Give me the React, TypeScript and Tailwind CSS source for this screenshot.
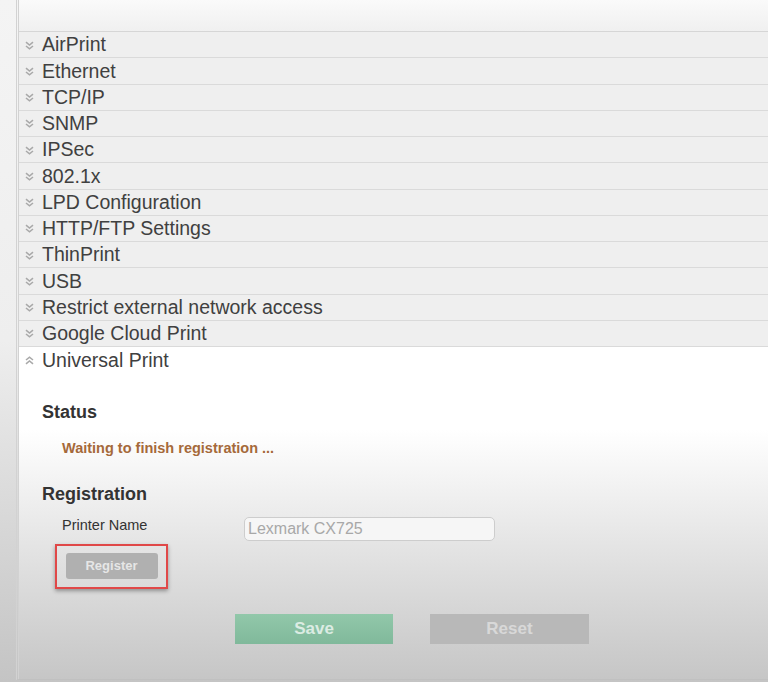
import React from 'react'

const sections = [
  'AirPrint',
  'Ethernet',
  'TCP/IP',
  'SNMP',
  'IPSec',
  '802.1x',
  'LPD Configuration',
  'HTTP/FTP Settings',
  'ThinPrint',
  'USB',
  'Restrict external network access',
  'Google Cloud Print',
]

function Chevrons({ up = false }: { up?: boolean }) {
  return (
    <svg width="9" height="9" viewBox="0 0 9 9" className={up ? 'rotate-180' : ''}>
      <path d="M1 1.2 L4.5 4 L8 1.2" fill="none" stroke="#a9a9a9" strokeWidth="1.6" />
      <path d="M1 5 L4.5 7.8 L8 5" fill="none" stroke="#a9a9a9" strokeWidth="1.6" />
    </svg>
  )
}

function App() {
  return (
    <div
      className="w-[768px] h-[682px] flex overflow-hidden bg-gradient-to-b from-[#f4f4f4] via-[#eeeeee] to-[#c4c4c4]"
      style={{ fontFamily: '"Liberation Sans", Arial, sans-serif' }}
    >
      {/* left margin strip */}
      <div className="w-[16px] shrink-0" />

      <div className="flex-1 flex flex-col border-l-[3px] border-double border-[#d2d2d2] h-[680px] border-b border-b-[#c0c0c0]">
        {/* header remnant */}
        <div className="h-[32px] bg-gradient-to-b from-[#fafafa] to-[#f0f0f0] border-b border-[#d6d6d6]" />

        {/* collapsed sections */}
        {sections.map((s) => (
          <div
            key={s}
            className="h-[26.25px] flex items-center gap-[8px] pl-[6px] pt-[1px] bg-[#efefef] border-b border-[#dadada] text-[19.5px] text-[#404040] leading-none"
          >
            <Chevrons />
            <span>{s}</span>
          </div>
        ))}

        {/* expanded section */}
        <div className="flex-1 flex flex-col bg-gradient-to-b from-white via-white via-[25%] to-[#c6c6c6]">
          <div className="h-[26px] flex items-center gap-[8px] pl-[6px] pt-[1px] text-[19.5px] text-[#404040] leading-none">
            <Chevrons up />
            <span>Universal Print</span>
          </div>

          <div className="pl-[23px] pt-[30px] flex flex-col">
            <h3 className="text-[18px] font-bold text-[#333] leading-none">Status</h3>
            <p className="mt-[20px] ml-[20px] text-[14.5px] font-bold text-[#a5693a] leading-none">
              Waiting to finish registration ...
            </p>

            <h3 className="mt-[29px] text-[18px] font-bold text-[#333] leading-none">Registration</h3>

            <div className="mt-[14px] ml-[20px] flex items-center">
              <span className="w-[182px] text-[14.5px] text-[#333] leading-none -mt-[7px]">Printer Name</span>
              <div className="w-[251px] h-[24px] rounded-[5px] border border-[#cdcdcd] bg-[#f6f6f6] flex items-center pl-[3px] text-[16px] text-[#a8a8a8] leading-none">
                Lexmark CX725
              </div>
            </div>

            <div className="mt-[3px] ml-[13px] w-[113px] h-[45px] border-2 border-[#e04848] shadow-[0_2px_4px_rgba(0,0,0,0.35)] flex items-center justify-center">
              <div className="w-[92px] h-[26px] rounded-[3px] bg-[#b0b0b0] flex items-center justify-center text-[13px] font-bold text-[#e6e6e6]">
                Register
              </div>
            </div>

            <div className="mt-[25px] ml-[193px] flex gap-[37px]">
              <div className="w-[158px] h-[30px] bg-gradient-to-b from-[#92c8aa] to-[#80b99b] flex items-center justify-center text-[17px] font-bold text-[#dcece3]">
                Save
              </div>
              <div className="w-[159px] h-[30px] bg-[#b8b8b8] flex items-center justify-center text-[17px] font-bold text-[#d8d8d8]">
                Reset
              </div>
            </div>
          </div>
        </div>
      </div>
    </div>
  )
}

export default App
